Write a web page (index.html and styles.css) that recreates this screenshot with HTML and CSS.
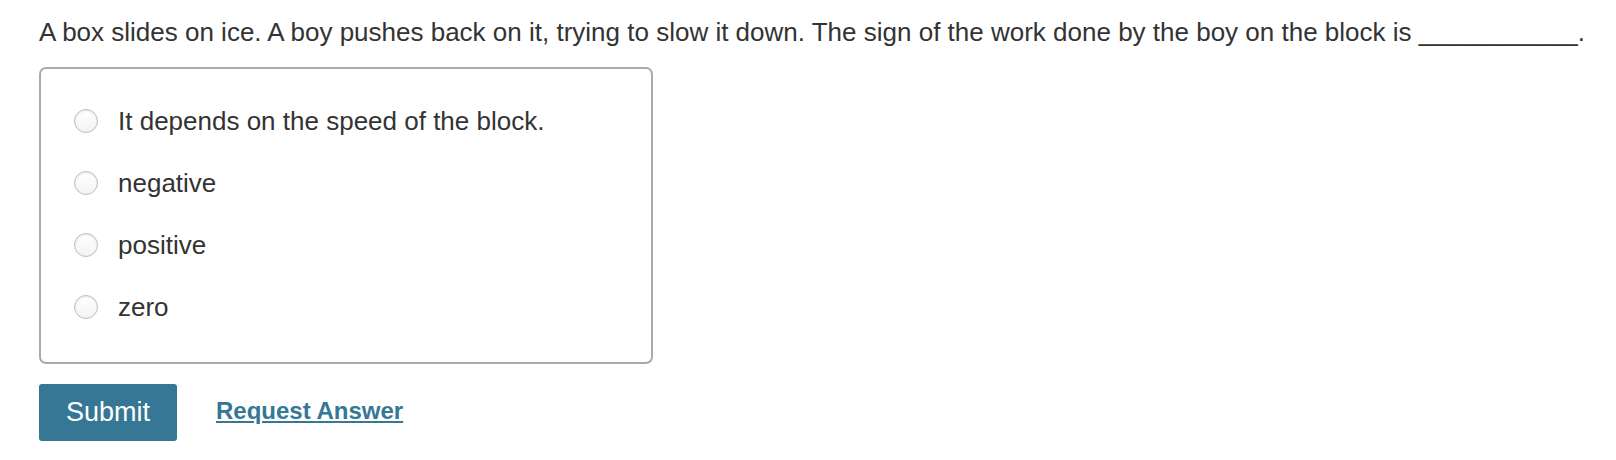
FILE: index.html
```html
<!DOCTYPE html>
<html>
<head>
<meta charset="utf-8">
<link rel="stylesheet" href="styles.css">
</head>
<body>
<div class="page">
  <p class="question">A box slides on ice. A boy pushes back on it, trying to slow it down. The sign of the work done by the boy on the block is <span class="blank">___________</span>.</p>
  <div class="choices">
    <label class="choice"><span class="radio"></span><span class="label">It depends on the speed of the block.</span></label>
    <label class="choice"><span class="radio"></span><span class="label">negative</span></label>
    <label class="choice"><span class="radio"></span><span class="label">positive</span></label>
    <label class="choice"><span class="radio"></span><span class="label">zero</span></label>
  </div>
  <div class="actions">
    <button class="submit">Submit</button>
    <a class="request" href="#">Request Answer</a>
  </div>
</div>
</body>
</html>
```
FILE: styles.css
```css
html, body { margin: 0; padding: 0; background: #fff; }
body { font-family: "Liberation Sans", Arial, Helvetica, sans-serif; color: #333; }
.page { padding: 17px 0 0 39px; }
.question { margin: 0; font-size: 26px; line-height: 30px; }
.blank { color: #333; }
.choices {
  margin-top: 20px;
  width: 610px;
  border: 2px solid #aaa;
  border-radius: 7px;
  padding: 21px 0 24px 0;
  display: flex;
  flex-direction: column;
}
.choice { display: flex; align-items: center; height: 62px; padding-left: 33px; font-size: 26px; cursor: pointer; }
.radio {
  box-sizing: border-box;
  width: 24px; height: 24px;
  border: 1px solid #bdbdbd;
  border-radius: 50%;
  background: linear-gradient(#fff, #f3f3f3);
  box-shadow: inset 0 1px 2px rgba(0,0,0,0.1);
  margin-right: 20px;
  flex: none;
}
.actions { margin-top: 20px; display: flex; align-items: center; gap: 39px; }
.submit {
  width: 138px; height: 57px;
  background: #357795; color: #fff;
  border: none; border-radius: 3px;
  font-family: "Liberation Sans", Arial, sans-serif;
  font-size: 27px;
  padding: 0;
}
.request { color: #357795; font-weight: bold; font-size: 24px; text-decoration: underline; margin-bottom: 3px; }
```
